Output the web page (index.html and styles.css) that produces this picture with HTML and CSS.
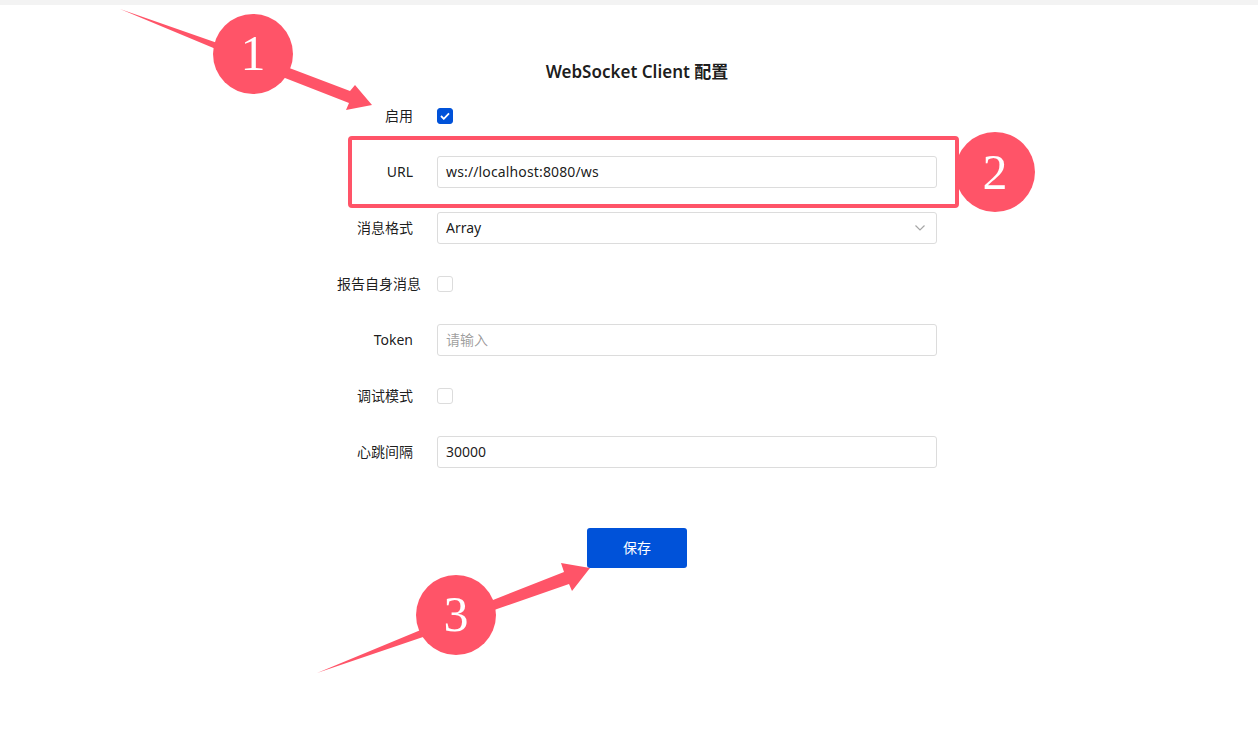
FILE: index.html
```html
<!DOCTYPE html>
<html lang="zh-CN">
<head>
  <meta charset="UTF-8">
  <title>WebSocket Client 配置</title>
  <link rel="stylesheet" href="styles.css">
</head>
<body>

  <div class="top-bar"></div>

  <div class="config">
    <h1>WebSocket Client 配置</h1>

    <div class="row">
      <label>启用</label>
      <span class="checkbox checked">
        <svg width="10" height="8" viewBox="0 0 10 8"><path d="M1 4l2.8 2.8L9 1.4" fill="none" stroke="#fff" stroke-width="1.8"/></svg>
      </span>
    </div>
    <div class="row">
      <label>URL</label>
      <div class="input url">ws://localhost:8080/ws</div>
    </div>
    <div class="row">
      <label>消息格式</label>
      <div class="input select">
        Array
        <svg width="12" height="8" viewBox="0 0 12 8"><path d="M1.5 1.5L6 6l4.5-4.5" fill="none" stroke="#a6a6a6" stroke-width="1.2"/></svg>
      </div>
    </div>
    <div class="row">
      <label>报告自身消息</label>
      <span class="checkbox"></span>
    </div>
    <div class="row">
      <label>Token</label>
      <div class="input placeholder">请输入</div>
    </div>
    <div class="row">
      <label>调试模式</label>
      <span class="checkbox"></span>
    </div>
    <div class="row">
      <label>心跳间隔</label>
      <div class="input">30000</div>
    </div>

    <button>保存</button>
  </div>

  <!-- 标注 -->
  <svg class="marks" width="1258" height="732" viewBox="0 0 1258 732">
    <path d="M120 9L292 69L350 91L355 85L372 105L346 110L349 103L285 78Z"/>
    <path d="M317 673L493 600L564 572L561 563L590 568L572 591L569 584L497 609L423 637Z"/>
    <rect class="box" x="350" y="138" width="607" height="68" rx="2"/>
    <circle cx="253" cy="54" r="40"/>
    <circle cx="995" cy="172" r="40"/>
    <circle cx="456" cy="615" r="40"/>
    <text x="253" y="70">1</text>
    <text x="995" y="189">2</text>
    <text x="456" y="631">3</text>
  </svg>

</body>
</html>
```

FILE: styles.css
```css
body {
  margin: 0;
  height: 732px;
  position: relative;
  overflow: hidden;
  background: #fff;
  color: rgba(0, 0, 0, 0.9);
  font-family: "Noto Sans", "Noto Sans CJK SC", sans-serif;
  font-size: 14px;
}

.top-bar {
  height: 5px;
  background: #f3f3f3;
}

.config {
  width: 600px;
  margin-left: 337px;
}

h1 {
  margin: 0;
  padding-top: 55px;
  height: 40px;
  line-height: 24px;
  font-size: 17px;
  font-weight: 600;
  text-align: center;
}

.row {
  display: flex;
  align-items: center;
  height: 32px;
  margin-bottom: 24px;
}

label {
  flex: none;
  width: 76px;
  margin-right: 24px;
  padding-bottom: 2px;
  text-align: right;
  white-space: nowrap;
}

.input {
  flex: 1;
  height: 30px;
  padding: 0 9px 0 8px;
  line-height: 30px;
  border: 1px solid #dcdcdc;
  border-radius: 3px;
}

.url {
  letter-spacing: 0.14px;
}

.select {
  display: flex;
  align-items: center;
  justify-content: space-between;
  padding-right: 10px;
}

.placeholder {
  color: rgba(0, 0, 0, 0.4);
}

.checkbox {
  display: flex;
  align-items: center;
  justify-content: center;
  box-sizing: border-box;
  width: 16px;
  height: 16px;
  border: 1px solid #dcdcdc;
  border-radius: 3px;
}

.checkbox.checked {
  background: #0052d9;
  border-color: #0052d9;
}

button {
  display: block;
  width: 100px;
  height: 40px;
  margin: 60px auto 0;
  padding: 0 0 2px;
  border: none;
  border-radius: 3px;
  background: #0052d9;
  color: #fff;
  font: inherit;
}

.marks {
  position: absolute;
  left: 0;
  top: 0;
  fill: #ff5468;
}

.marks .box {
  fill: none;
  stroke: #ff5468;
  stroke-width: 4;
}

.marks text {
  fill: #fff;
  font-family: "Liberation Serif", serif;
  font-size: 50px;
  text-anchor: middle;
}
```
